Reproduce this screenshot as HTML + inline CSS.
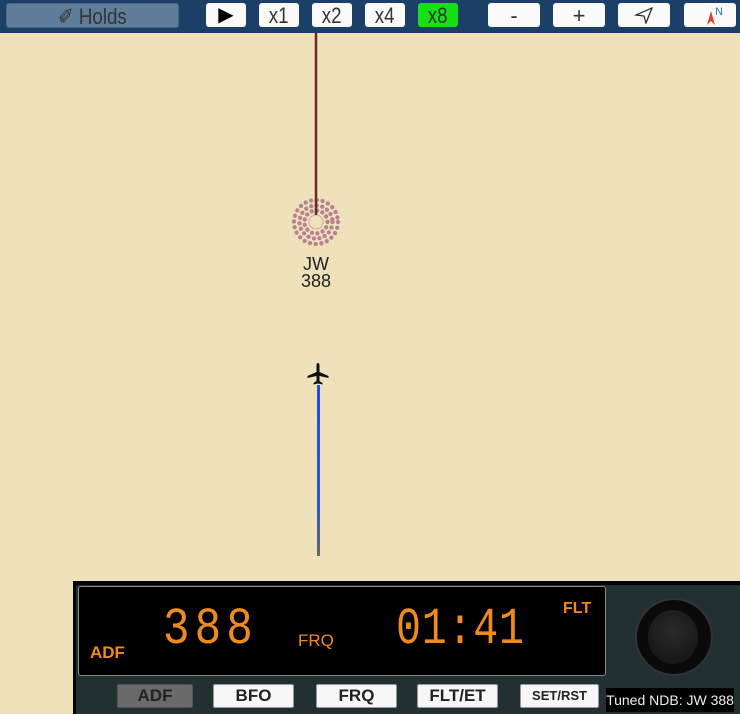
<!DOCTYPE html><html><head><style>
body{margin:0;width:740px;height:714px;background:#efe1b9;position:relative;overflow:hidden;font-family:"Liberation Sans",sans-serif}
.top{position:absolute;left:0;top:0;width:740px;height:33px;background:#1b3f66}
.b{position:absolute;top:3px;height:24px;background:#fafafa;border-radius:3px;color:#333;font-size:22px;text-align:center;line-height:25px}
.b span{display:inline-block;transform:scaleX(.85)}
.d{position:absolute;color:#f08a1e}
.k{position:absolute;top:684px;height:22px;background:#f7f7f7;border:1px solid #999;border-radius:2px;font-weight:bold;font-size:17px;text-align:center;line-height:22px;color:#222}
</style></head><body>
<div class="top">
<div class="b" style="left:6px;width:171px;background:#5f7d9a;border:1px solid #4a6683;top:3px;height:23px;color:#333"><span>✐ Holds</span></div>
<div class="b" style="left:206px;width:40px;font-size:20px;color:#000">▶</div>
<div class="b" style="left:259px;width:40px"><span>x1</span></div>
<div class="b" style="left:312px;width:40px"><span>x2</span></div>
<div class="b" style="left:365px;width:40px"><span>x4</span></div>
<div class="b" style="left:418px;width:40px;background:#14e014"><span>x8</span></div>
<div class="b" style="left:488px;width:52px">-</div>
<div class="b" style="left:553px;width:52px">+</div>
<div class="b" style="left:618px;width:52px"><svg width="20" height="18" viewBox="0 0 20 18" style="margin-top:3px"><path d="M2 9L18 2L12 17L10 10Z" fill="none" stroke="#222" stroke-width="1.2"/></svg></div>
<div class="b" style="left:684px;width:52px"><svg width="30" height="24" viewBox="0 0 30 24"><path d="M12 22L16 8L20 22L16 18Z" fill="#e0402a"/><text x="20" y="12" font-size="11" fill="#2a6fc9" font-family="Liberation Sans">N</text></svg></div>
</div>
<svg style="position:absolute;left:0;top:0" width="740" height="714">
<defs><linearGradient id="g" x1="0" y1="0" x2="0" y2="1"><stop offset="0" stop-color="#1a4ee6"/><stop offset="0.7" stop-color="#2a5ad0"/><stop offset="1" stop-color="#666"/></linearGradient></defs>
<g fill="none" stroke="#b88090" stroke-linecap="round" stroke-width="4.3">
<circle cx="316" cy="222" r="22" stroke-dasharray="0 5.8"/>
<circle cx="316" cy="222" r="16.5" stroke-dasharray="0 5.6"/>
<circle cx="316" cy="222" r="11.5" stroke-dasharray="0 5.5"/>
</g>
<circle cx="316" cy="222" r="7" fill="#efe1b9" stroke="#d0a8a8" stroke-width="1"/>
<line x1="316" y1="33" x2="316" y2="215" stroke="#6a2a2a" stroke-width="2.5"/>
<text x="316" y="270" font-size="18" text-anchor="middle" fill="#222">JW</text>
<text x="316" y="287" font-size="18" text-anchor="middle" fill="#222">388</text>
<rect x="317" y="385" width="3" height="171" fill="url(#g)"/>
<path d="M318 363c1.5 0 1.5 2 1.5 4v5l9 4v2l-9-2v5l3 2v1.5l-4.5-1-4.5 1V383l3-2v-5l-9 2v-2l9-4v-5c0-2 0-4 1.5-4z" fill="#111"/>
</svg>
<div style="position:absolute;left:73px;top:581px;width:667px;height:133px;background:#000"></div>
<div style="position:absolute;left:76px;top:585px;width:664px;height:129px;background:#22302f"></div>
<div style="position:absolute;left:78px;top:586px;width:526px;height:88px;background:#000;border:1px solid #888;border-radius:3px"></div>
<div class="d" style="left:90px;top:643px;font-size:17px;font-weight:bold">ADF</div>
<div class="d" style="left:563px;top:600px;font-size:16px;font-weight:bold">FLT</div>
<div class="d" style="left:298px;top:631px;font-size:17px">FRQ</div>
<div class="d" style="left:163px;top:600px;font-size:52px;letter-spacing:6px;font-family:'Liberation Mono',monospace;transform:scaleX(.85);transform-origin:left">388</div>
<div class="d" style="left:396px;top:600px;font-size:52px;letter-spacing:1px;font-family:'Liberation Mono',monospace;transform:scaleX(.8);transform-origin:left">01:41</div>
<div style="position:absolute;left:637px;top:600px;width:74px;height:74px;border-radius:50%;background:#0a0a0a;box-shadow:0 0 0 2px #333"></div>
<div style="position:absolute;left:648px;top:610px;width:50px;height:54px;border-radius:50%;background:radial-gradient(circle at 50% 40%,#2a2a2a,#111)"></div>
<div class="k" style="left:117px;width:74px;background:#6a6a6a;border-color:#555">ADF</div>
<div class="k" style="left:213px;width:79px">BFO</div>
<div class="k" style="left:316px;width:79px">FRQ</div>
<div class="k" style="left:417px;width:79px">FLT/ET</div>
<div class="k" style="left:520px;width:77px;font-size:13px">SET/RST</div>
<div style="position:absolute;left:606px;top:688px;width:128px;height:24px;background:#000;color:#eee;font-size:14px;line-height:24px;text-align:center">Tuned NDB: JW 388</div>
</body></html>
